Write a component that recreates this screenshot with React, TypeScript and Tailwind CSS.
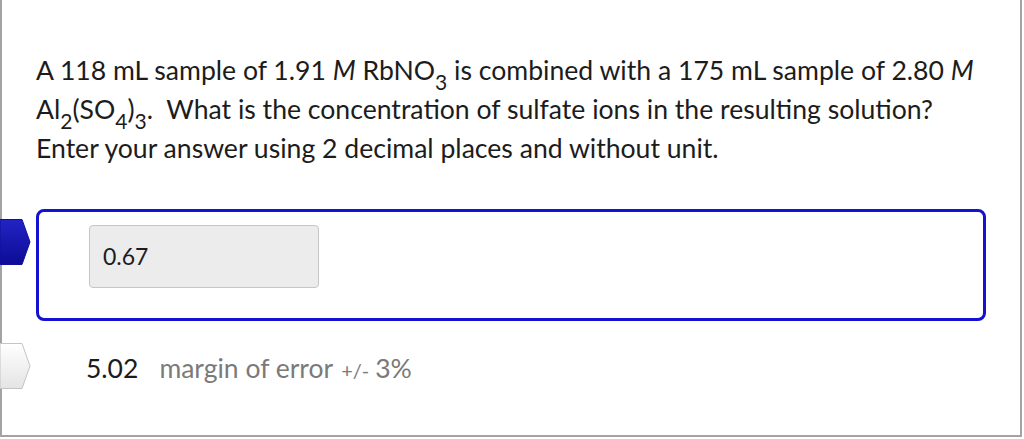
import React from "react";

function Pointer({ active }: { active: boolean }) {
  return (
    <svg width="31" height="46" viewBox="0 0 31 46" className="shrink-0">
      <defs>
        <linearGradient id={active ? "pa" : "pi"} x1="0" y1="0" x2="0" y2="1">
          <stop offset="0" stopColor={active ? "#2323c4" : "#ffffff"} />
          <stop offset="1" stopColor={active ? "#0c0c96" : "#e4e4e4"} />
        </linearGradient>
      </defs>
      <polygon
        points="0,0.5 22,0.5 30,23 22,45.5 0,45.5"
        fill={`url(#${active ? "pa" : "pi"})`}
        stroke={active ? "#10109a" : "#c4c4c4"}
        strokeWidth="1"
      />
    </svg>
  );
}

const sub = "text-[21px] leading-[0] align-[-5px]";

export default function App() {
  return (
    <div className="w-[1024px] h-[439px] bg-white" style={{ fontFamily: "Lato, 'Noto Sans', sans-serif" }}>
      <div className="w-[1022px] h-[437px] border-l-2 border-r-2 border-b-2 border-[#a3a3a3] flex flex-col">
        <p className="pl-[34px] pt-[51px] text-[26.6px] leading-[39px] text-[#1c1c1c]">
          A 118 mL sample of 1.91 <i>M</i> RbNO<sub className={sub}>3</sub> is combined with a 175 mL sample of 2.80 <i>M</i>
          <br />
          Al<sub className={sub}>2</sub>(SO<sub className={sub}>4</sub>)<sub className={sub}>3</sub>.&nbsp; What is the concentration of sulfate ions in the resulting solution?
          <br />
          Enter your answer using 2 decimal places and without unit.
        </p>

        <div className="flex items-start -ml-[2px] mt-[41px]">
          <div className="mt-[10px]">
            <Pointer active />
          </div>
          <div className="ml-[5px] w-[950px] h-[112px] border-[3px] border-[#1212d0] rounded-[8px] pl-[50px] pt-[13px]">
            <div className="w-[230px] h-[63px] bg-[#ececec] border border-[#c6c6c6] rounded-[4px] flex items-center pl-[13px] text-[23px] text-[#1c1c1c]">
              0.67
            </div>
          </div>
        </div>

        <div className="flex items-center -ml-[2px] mt-[22px]">
          <Pointer active={false} />
          <div className="ml-[55px] flex items-baseline text-[26.5px] leading-none mt-[4px]">
            <span className="text-[#1c1c1c]">5.02</span>
            <span className="ml-[21px] text-[#7a7a7a]">margin of error</span>
            <span className="ml-[8px] text-[20px] text-[#7a7a7a]">+/-</span>
            <span className="ml-[6px] text-[#7a7a7a]">3%</span>
          </div>
        </div>
      </div>
    </div>
  );
}
